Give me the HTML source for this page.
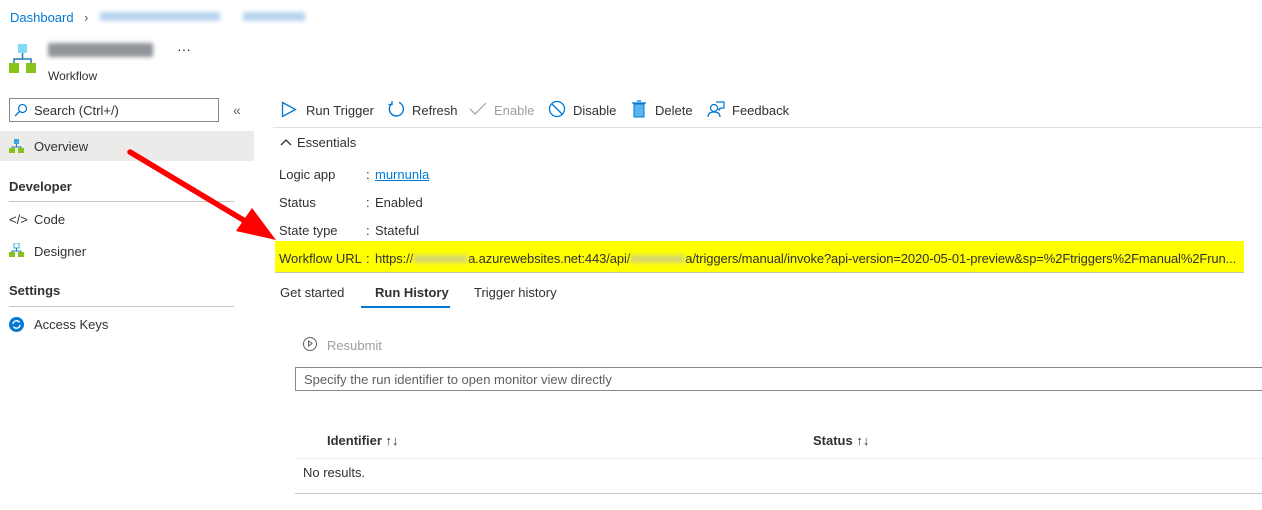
<!DOCTYPE html>
<html><head><meta charset="utf-8"><style>
*{margin:0;padding:0;box-sizing:border-box}
body{width:1262px;height:510px;background:#fff;font-family:"Segoe UI","Liberation Sans",sans-serif;font-size:13px;color:#323130;position:relative;overflow:hidden}
.a{position:absolute;white-space:nowrap;line-height:16px;margin-top:1px}
svg.a{margin-top:0}
.blur{position:absolute;filter:blur(2px)}
.ln{position:absolute;height:1px;background:#c8c6c4}
</style></head><body>
<div class="a" style="left:10px;top:9px;color:#0078d4">Dashboard</div>
<div class="a" style="left:84px;top:9px;color:#605e5c">›</div>
<div class="blur" style="left:100px;top:12px;width:120px;height:9px;background:#b8d4ee"></div>
<div class="blur" style="left:243px;top:12px;width:62px;height:9px;background:#b8d4ee"></div>
<svg class="a" style="left:9px;top:44px" width="28" height="30" viewBox="0 0 28 30">
<rect x="9" y="0" width="9" height="9" fill="#7fdcf5"/><path d="M13.5 9v6M5 20v-5h17v5" stroke="#1e7fb0" stroke-width="1.5" fill="none"/>
<rect x="0" y="19" width="10" height="10" fill="#86c41a"/><rect x="17" y="19" width="10" height="10" fill="#86c41a"/></svg>
<div class="blur" style="left:48px;top:43px;width:105px;height:14px;background:#8f9499"></div>
<div class="a" style="left:177px;top:40px;font-size:14px">···</div>
<div class="a" style="left:48px;top:67px;font-size:12px;color:#323130">Workflow</div>
<div style="position:absolute;left:9px;top:98px;width:210px;height:24px;border:1px solid #8a8886"></div>
<svg class="a" style="left:14px;top:103px" width="14" height="14"><circle cx="8.5" cy="5.5" r="4" stroke="#0078d4" fill="none" stroke-width="1.2"/><path d="M5.5 8.5L1 13" stroke="#0078d4" stroke-width="1.3"/></svg>
<div class="a" style="left:34px;top:102px">Search (Ctrl+/)</div>
<div class="a" style="left:233px;top:101px;color:#605e5c;font-size:14px">«</div>
<div style="position:absolute;left:0;top:131px;width:254px;height:30px;background:#edebe9"></div>
<svg class="a" style="left:9px;top:139px" width="16" height="14"><rect x="5" y="0" width="5" height="5" fill="#3ba7e0"/><path d="M7.5 5v3M3 10V8h9v2" stroke="#1e7fb0" fill="none"/><rect x="0" y="9" width="6" height="5" fill="#86c41a"/><rect x="9" y="9" width="6" height="5" fill="#86c41a"/></svg>
<div class="a" style="left:34px;top:138px">Overview</div>
<div class="a" style="left:9px;top:178px;font-weight:bold">Developer</div>
<div class="ln" style="left:9px;top:201px;width:225px"></div>
<div class="a" style="left:9px;top:211px">&lt;/&gt;</div>
<div class="a" style="left:34px;top:211px">Code</div>
<svg class="a" style="left:9px;top:243px" width="16" height="14"><rect x="5" y="0" width="5" height="5" fill="none" stroke="#3ba7e0"/><path d="M7.5 5v3M3 10V8h9v2" stroke="#1e7fb0" fill="none"/><rect x="0" y="9" width="6" height="5" fill="#86c41a"/><rect x="9" y="9" width="6" height="5" fill="#86c41a"/></svg>
<div class="a" style="left:34px;top:243px">Designer</div>
<div class="a" style="left:9px;top:282px;font-weight:bold">Settings</div>
<div class="ln" style="left:9px;top:306px;width:225px"></div>
<svg class="a" style="left:9px;top:317px" width="15" height="15"><circle cx="7.5" cy="7.5" r="7.5" fill="#0078d4"/><path d="M4 7a3.5 3.5 0 0 1 6.5-1.5M11 8a3.5 3.5 0 0 1-6.5 1.5" stroke="#fff" stroke-width="1.4" fill="none"/></svg>
<div class="a" style="left:34px;top:316px">Access Keys</div>

<svg class="a" style="left:281px;top:101px" width="16" height="17"><path d="M1.5 1.5L14.5 8.5L1.5 15.5Z" stroke="#0078d4" fill="none" stroke-width="1.3"/></svg>
<div class="a" style="left:306px;top:102px">Run Trigger</div>
<svg class="a" style="left:387px;top:100px" width="18" height="18"><path d="M5 3.5A7 7 0 1 0 12 2.5" stroke="#0078d4" fill="none" stroke-width="1.4"/><path d="M5 1v3.5H1.5" stroke="#0078d4" fill="none" stroke-width="1.3"/></svg>
<div class="a" style="left:412px;top:102px">Refresh</div>
<svg class="a" style="left:469px;top:102px" width="18" height="14"><path d="M1 7l5 5L17 1" stroke="#a19f9d" fill="none" stroke-width="1.2"/></svg>
<div class="a" style="left:494px;top:102px;color:#a19f9d">Enable</div>
<svg class="a" style="left:548px;top:100px" width="18" height="18"><circle cx="9" cy="9" r="7.5" stroke="#0078d4" fill="none" stroke-width="1.3"/><path d="M4 4l10 10" stroke="#0078d4" stroke-width="1.3"/></svg>
<div class="a" style="left:573px;top:102px">Disable</div>
<svg class="a" style="left:632px;top:100px" width="14" height="18"><rect x="2" y="4" width="10" height="13" fill="#59b4f0" stroke="#0078d4"/><path d="M0 3h14M5 1h4" stroke="#0078d4" stroke-width="1.3"/></svg>
<div class="a" style="left:655px;top:102px">Delete</div>
<svg class="a" style="left:707px;top:100px" width="18" height="18"><circle cx="7" cy="8" r="3.5" stroke="#0078d4" fill="none" stroke-width="1.2"/><path d="M1 17c0-4 3-5 6-5s6 1 6 5M9 2h8v6h-3l-2 2V8" stroke="#0078d4" fill="none" stroke-width="1.2"/></svg>
<div class="a" style="left:732px;top:102px">Feedback</div>
<div class="ln" style="left:273px;top:127px;width:989px;background:#e1dfdd"></div>
<svg class="a" style="left:280px;top:138px" width="12" height="8"><path d="M1 7l5-5 5 5" stroke="#323130" fill="none" stroke-width="1.3"/></svg>
<div class="a" style="left:297px;top:134px">Essentials</div>

<div class="a" style="left:279px;top:166px">Logic app</div><div class="a" style="left:366px;top:166px">:</div>
<div class="a" style="left:375px;top:166px;color:#0078d4;text-decoration:underline">murnunla</div>
<div class="a" style="left:279px;top:194px">Status</div><div class="a" style="left:366px;top:194px">:</div><div class="a" style="left:375px;top:194px">Enabled</div>
<div class="a" style="left:279px;top:222px">State type</div><div class="a" style="left:366px;top:222px">:</div><div class="a" style="left:375px;top:222px">Stateful</div>
<div style="position:absolute;left:275px;top:241px;width:969px;height:32px;background:#ffff00"></div>
<div class="ln" style="left:275px;top:272px;width:969px;background:#c8c6a0"></div>
<div class="a" style="left:279px;top:250px">Workflow URL</div><div class="a" style="left:366px;top:250px">:</div>
<div class="a" style="left:375px;top:250px;letter-spacing:-0.12px">https://<span style="display:inline-block;width:55px;height:8px;background:#d8d870;filter:blur(2px)"></span>a.azurewebsites.net:443/api/<span style="display:inline-block;width:55px;height:8px;background:#d8d870;filter:blur(2px)"></span>a/triggers/manual/invoke?api-version=2020-05-01-preview&amp;sp=%2Ftriggers%2Fmanual%2Frun...</div>

<div class="a" style="left:280px;top:284px">Get started</div>
<div class="a" style="left:375px;top:284px;font-weight:bold">Run History</div>
<div style="position:absolute;left:361px;top:306px;width:89px;height:2px;background:#0078d4"></div>
<div class="a" style="left:474px;top:284px">Trigger history</div>

<svg class="a" style="left:302px;top:336px" width="16" height="17"><circle cx="8" cy="8" r="6.5" stroke="#605e5c" fill="none"/><path d="M6.5 5v5l3.5-2.5z" stroke="#605e5c" fill="none"/></svg>
<div class="a" style="left:327px;top:337px;color:#a19f9d">Resubmit</div>
<div style="position:absolute;left:295px;top:367px;width:970px;height:24px;border:1px solid #8a8886"></div>
<div class="a" style="left:304px;top:371px;color:#605e5c">Specify the run identifier to open monitor view directly</div>
<div class="a" style="left:327px;top:432px;font-weight:600;color:#323130">Identifier <span style="font-weight:normal">↑↓</span></div>
<div class="a" style="left:813px;top:432px;font-weight:600">Status <span style="font-weight:normal">↑↓</span></div>
<div class="ln" style="left:295px;top:458px;width:967px;background:#edebe9"></div>
<div class="a" style="left:303px;top:464px">No results.</div>
<div class="ln" style="left:295px;top:493px;width:967px"></div>

<svg style="position:absolute;left:0;top:0" width="1262" height="510">
<line x1="130" y1="152" x2="250" y2="224" stroke="#f00" stroke-width="5.5" stroke-linecap="round"/>
<polygon points="276,240 236,231 252,208" fill="#f00"/>
</svg>
</body></html>
